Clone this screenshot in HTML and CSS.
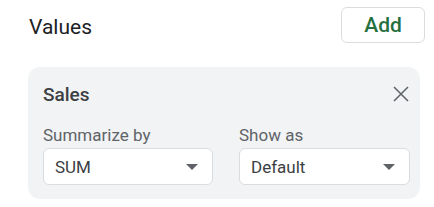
FILE: index.html
```html
<!DOCTYPE html>
<html lang="en">
<head>
    <meta charset="UTF-8">
    <title>Values</title>
    <link rel="stylesheet" href="styles.css">
</head>
<body>
    <div class="panel-header">
        <h2 class="panel-title">Values</h2>
        <button class="add-btn">Add</button>
    </div>

    <div class="value-card">
        <div class="card-head">
            <span class="card-title">Sales</span>
            <button class="close-btn" aria-label="Remove">
                <svg width="16" height="16" viewBox="0 0 16 16">
                    <path d="M1 1L15 15M15 1L1 15" stroke="#5f6368" stroke-width="1.5" fill="none"/>
                </svg>
            </button>
        </div>
        <div class="field-grid">
            <div class="field">
                <div class="field-label">Summarize by</div>
                <div class="select-box">
                    <span>SUM</span>
                    <span class="caret"></span>
                </div>
            </div>
            <div class="field">
                <div class="field-label">Show as</div>
                <div class="select-box">
                    <span>Default</span>
                    <span class="caret"></span>
                </div>
            </div>
        </div>
    </div>
</body>
</html>
```

FILE: styles.css
```css
body {
    margin: 0;
    background: #fff;
    font-family: Roboto, "Liberation Sans", sans-serif;
    color: #202124;
}

.panel-header {
    display: flex;
    justify-content: space-between;
    align-items: center;
    padding: 7px 9px 0 29px;
}

.panel-title {
    margin: 3px 0 0 0;
    font-size: 21px;
    font-weight: 400;
    color: #202124;
}

.add-btn {
    width: 84px;
    height: 36px;
    background: #fff;
    border: 1px solid #dadce0;
    border-radius: 6px;
    color: #25703f;
    font-family: inherit;
    font-size: 21px;
    font-weight: 500;
    padding: 0;
}

.value-card {
    margin: 24px 14px 0 28px;
    background: #f1f3f4;
    border-radius: 12px;
    padding: 15px 10px 14px 15px;
}

.card-head {
    display: flex;
    justify-content: space-between;
    align-items: center;
    height: 24px;
}

.card-title {
    font-size: 19px;
    font-weight: 500;
    color: #3c4043;
}

.close-btn {
    background: none;
    border: none;
    padding: 0;
    margin-right: 1px;
    display: flex;
}

.field-grid {
    display: grid;
    grid-template-columns: 170px 171px;
    gap: 26px;
    margin-top: 19px;
}

.field-label {
    font-size: 17px;
    color: #5f6368;
    line-height: 20px;
    margin-bottom: 3px;
}

.select-box {
    height: 35px;
    background: #fff;
    border: 1px solid #dadce0;
    border-radius: 6px;
    display: flex;
    align-items: center;
    justify-content: space-between;
    padding: 0 14px 0 11px;
    font-size: 17px;
    color: #3c4043;
}

.caret {
    width: 0;
    height: 0;
    border-left: 6px solid transparent;
    border-right: 6px solid transparent;
    border-top: 6px solid #5f6368;
}
```
